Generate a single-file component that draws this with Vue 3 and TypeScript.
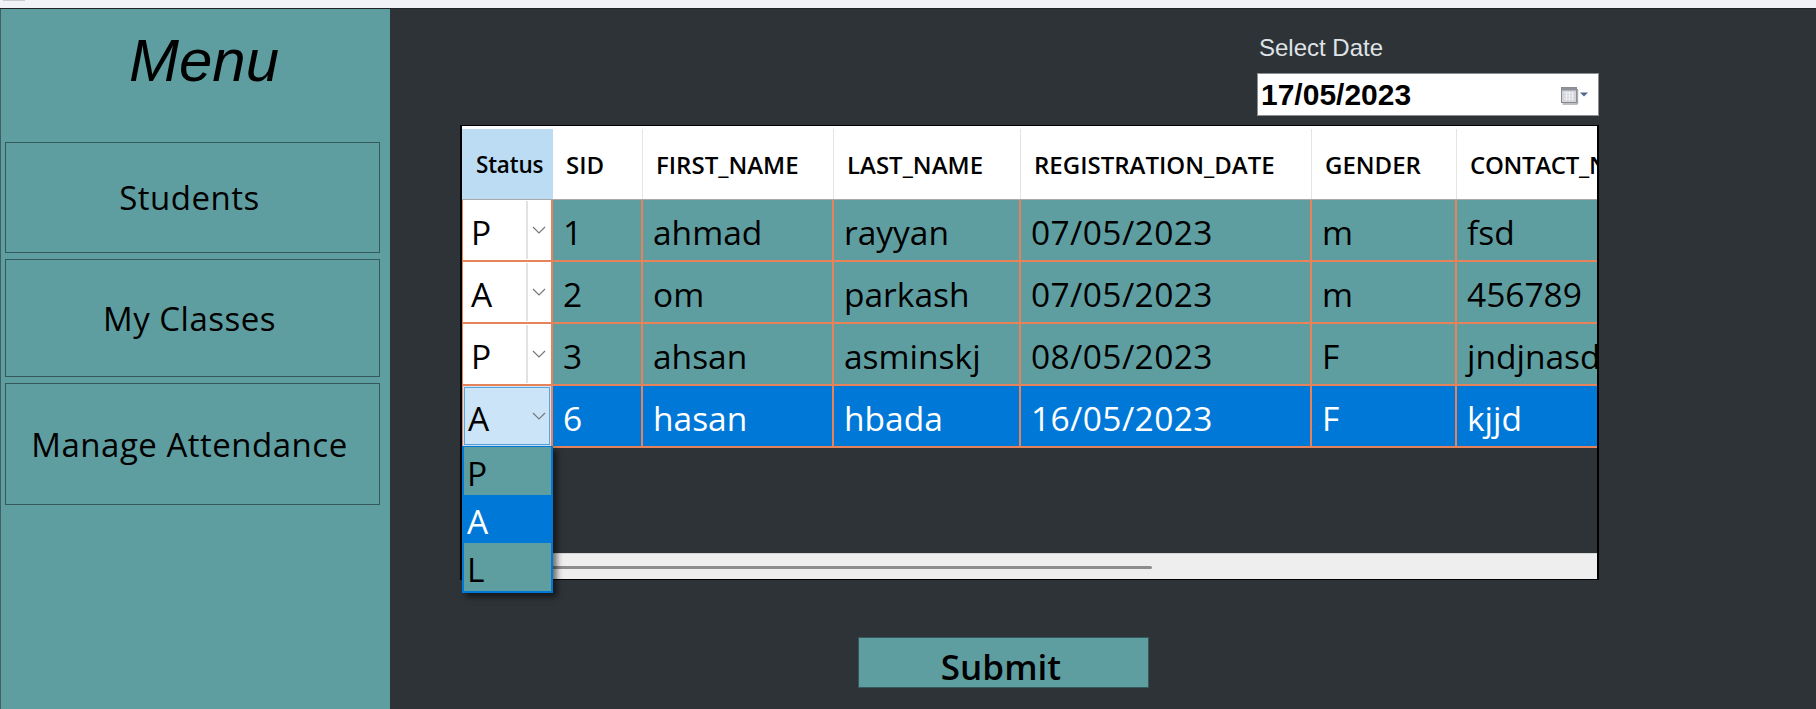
<script setup lang="ts">
interface Student {
  status: string
  sid: number
  first: string
  last: string
  date: string
  gender: string
  contact: string
  selected?: boolean
}

const columns = ['SID', 'FIRST_NAME', 'LAST_NAME', 'REGISTRATION_DATE', 'GENDER', 'CONTACT_NUMBER']
const menu = ['Students', 'My Classes', 'Manage Attendance']
const options = ['P', 'A', 'L']

const students: Student[] = [
  { status: 'P', sid: 1, first: 'ahmad', last: 'rayyan', date: '07/05/2023', gender: 'm', contact: 'fsd' },
  { status: 'A', sid: 2, first: 'om', last: 'parkash', date: '07/05/2023', gender: 'm', contact: '456789' },
  { status: 'P', sid: 3, first: 'ahsan', last: 'asminskj', date: '08/05/2023', gender: 'F', contact: 'jndjnasdjn' },
  { status: 'A', sid: 6, first: 'hasan', last: 'hbada', date: '16/05/2023', gender: 'F', contact: 'kjjd', selected: true }
]
</script>

<template>
  <div class="window">
    <div class="titlebar"><span class="tab"></span></div>
    <div class="content">
      <aside class="sidebar">
        <h1 class="menu-title">Menu</h1>
        <button v-for="item in menu" :key="item" class="menu-btn">{{ item }}</button>
      </aside>

      <main class="main">
        <div class="date-block">
          <label class="date-label">Select Date</label>
          <div class="date-input">
            <span>17/05/2023</span>
            <svg class="cal" width="30" height="20" viewBox="0 0 30 20">
              <rect x="2.5" y="2.5" width="15" height="15" fill="#d3d5da" stroke="#85888f" />
              <rect x="2.5" y="2.5" width="15" height="3" fill="#8f929b" />
              <path d="M5 8h10M5 11h10M5 14h10M7.5 6.5v9M10.5 6.5v9M13.5 6.5v9" stroke="#f0f0f3" stroke-width="1" />
              <path d="M18.5 19h-15M18.5 4v15" stroke="#a9a9a9" stroke-width="1.4" fill="none" />
              <path d="M21 7.5h8l-4 4z" fill="#4f6592" />
            </svg>
          </div>
        </div>

        <div class="grid">
          <div class="row head">
            <div class="hcell status-head">Status</div>
            <div v-for="col in columns" :key="col" class="hcell">{{ col }}</div>
          </div>
          <div v-for="s in students" :key="s.sid" class="row body" :class="{ selected: s.selected }">
            <div class="cell status-cell">
              <div class="combo">
                <span class="combo-value">{{ s.status }}</span>
                <span class="combo-arrow">
                  <svg width="14" height="8" viewBox="0 0 14 8"><path d="M1 1l6 6 6-6" fill="none" stroke="#777" stroke-width="1.2" /></svg>
                </span>
              </div>
            </div>
            <div class="cell">{{ s.sid }}</div>
            <div class="cell">{{ s.first }}</div>
            <div class="cell">{{ s.last }}</div>
            <div class="cell date">{{ s.date }}</div>
            <div class="cell">{{ s.gender }}</div>
            <div class="cell">{{ s.contact }}</div>
          </div>
          <div class="empty"></div>
          <div class="scrollbar"><div class="thumb"></div></div>

          <ul class="dropdown">
            <li v-for="o in options" :key="o" :class="{ active: o === 'A' }">{{ o }}</li>
          </ul>
        </div>

        <button class="submit">Submit</button>
      </main>
    </div>
  </div>
</template>

<style>
html, body {
  margin: 0;
  overflow: hidden;
  background: #2e3338;
}
</style>

<style scoped>
.window {
  width: 1816px;
  height: 709px;
  display: flex;
  flex-direction: column;
  font-family: "Open Sans", "Noto Sans", sans-serif;
  overflow: hidden;
}

.titlebar {
  height: 8px;
  background: #f0f2f8;
  border-bottom: 1px solid #1f2226;
  flex: none;
}

.tab {
  display: block;
  width: 22px;
  height: 1px;
  margin-left: 3px;
  background: #c9c9c9;
}

.content {
  flex: 1;
  display: flex;
  min-height: 0;
}

.sidebar {
  width: 390px;
  flex: none;
  background: #5f9ea0;
  border-left: 1px solid #3f5f60;
  box-sizing: border-box;
  padding: 0 0 0 4px;
  display: flex;
  flex-direction: column;
  align-items: flex-start;
}

.menu-title {
  margin: 16px 0 0 0;
  width: 398px;
  height: 117px;
  text-align: center;
  font-family: "Liberation Sans", Arial, sans-serif;
  font-size: 60px;
  line-height: 72px;
  font-weight: 400;
  font-style: italic;
  color: #000;
}

.menu-btn {
  width: 375px;
  height: 111px;
  margin-bottom: 6px;
  background: #5f9ea0;
  border: 1px solid #35595a;
  font-family: inherit;
  font-size: 33px;
  font-weight: 500;
  color: #000;
  padding: 0 6px 0 0;
  box-sizing: border-box;
  letter-spacing: 0.5px;
}

.menu-btn:nth-of-type(2) {
  height: 118px;
}

.menu-btn:nth-of-type(3) {
  height: 122px;
}

.main {
  flex: 1;
  min-width: 0;
  background: #2e3338;
  display: flex;
  flex-direction: column;
  align-items: flex-start;
}

.date-block {
  margin: 25px 0 0 867px;
}

.date-label {
  display: block;
  font-family: "Liberation Sans", Arial, sans-serif;
  font-size: 24px;
  line-height: 28px;
  color: #dfe3e6;
  margin-left: 2px;
}

.date-input {
  margin-top: 11px;
  width: 342px;
  height: 43px;
  background: #fff;
  border: 1px solid #8b8f94;
  box-sizing: border-box;
  display: flex;
  align-items: center;
  justify-content: space-between;
  padding: 0 9px 0 3px;
  font-family: "Liberation Sans", Arial, sans-serif;
  font-size: 30px;
  font-weight: 700;
  color: #000;
}

.grid {
  position: relative;
  margin: 9px 0 0 70px;
  width: 1139px;
  height: 455px;
  box-sizing: border-box;
  border: 1px solid #000;
  border-width: 1px 2px 1px 2px;
  background: #2e3338;
  display: flex;
  flex-direction: column;
  overflow: visible;
}

.row {
  display: grid;
  grid-template-columns: 91px 90px 191px 187px 291px 145px 140px;
  flex: none;
  overflow: hidden;
}

.head {
  height: 74px;
  background: #fff;
  border-bottom: 1px solid #a9a9a9;
  box-sizing: border-box;
  padding-top: 3px;
}

.hcell {
  display: flex;
  align-items: center;
  padding-left: 13px;
  font-size: 24px;
  font-weight: 600;
  color: #000;
  white-space: nowrap;
  overflow: hidden;
  border-right: 1px solid #e4e4e4;
}

.hcell:last-child {
  border-right: 0;
  letter-spacing: -0.3px;
}

.status-head {
  background: #bcdcf4;
  padding-left: 14px;
  font-size: 22.5px;
  border-right: 0;
  letter-spacing: -0.2px;
}

.body {
  height: 62px;
  background: #5f9ea0;
  border-bottom: 2px solid #e6835a;
  box-sizing: border-box;
  color: #000;
}

.cell {
  display: flex;
  align-items: center;
  padding: 4px 0 0 10px;
  font-size: 33.5px;
  white-space: nowrap;
  overflow: hidden;
  border-right: 2px solid #e6835a;
}

.cell:last-child {
  border-right: 0;
}

.cell.date {
  letter-spacing: 0.4px;
}

.selected {
  background: #0078d7;
  color: #fff;
}

.status-cell {
  padding: 1px;
  background: #fff;
  border-left: 1px solid #e6835a;
  box-sizing: border-box;
}

.combo {
  flex: 1;
  height: 100%;
  display: flex;
  align-items: stretch;
  color: #000;
}

.combo-value {
  flex: 1;
  padding-left: 7px;
  line-height: 62px;
}

.combo-arrow {
  width: 22px;
  flex: none;
  display: flex;
  align-items: center;
  justify-content: center;
  border-left: 2px solid #e2e2e2;
}

.selected .status-cell {
  background: #cce4f7;
  padding: 1px;
}

.selected .combo {
  outline: 1px solid #5aa5dc;
  outline-offset: -1px;
}

.selected .combo-arrow {
  border-left: 0;
}

.selected .combo-value {
  padding-left: 4px;
}

.empty {
  flex: 1;
}

.scrollbar {
  height: 26px;
  flex: none;
  background: #eeeeee;
  border-top: 1px solid #d6d6d6;
  box-sizing: border-box;
  display: flex;
  align-items: center;
}

.thumb {
  width: 690px;
  height: 3px;
  background: #8c8c8c;
  border-radius: 2px;
  margin-top: 2px;
}

.dropdown {
  position: absolute;
  left: 0;
  top: 320px;
  width: 91px;
  height: 147px;
  margin: 0;
  padding: 0;
  list-style: none;
  box-sizing: border-box;
  border: 2px solid #0078d7;
  border-top-width: 1px;
  background: #5f9ea0;
  box-shadow: 4px 4px 6px rgba(0, 0, 0, 0.55);
  font-size: 33.5px;
  color: #000;
}

.dropdown li {
  height: 48px;
  line-height: 52px;
  padding-left: 3px;
}

.dropdown li.active {
  background: #0078d7;
  color: #fff;
}

.submit {
  margin: 57px 0 0 468px;
  width: 291px;
  height: 51px;
  background: #5f9ea0;
  border: 1px solid #35595a;
  font-family: inherit;
  font-size: 35px;
  font-weight: 600;
  color: #000;
  padding: 1px 5px 0 0;
  line-height: 56px;
  box-sizing: border-box;
}
</style>
